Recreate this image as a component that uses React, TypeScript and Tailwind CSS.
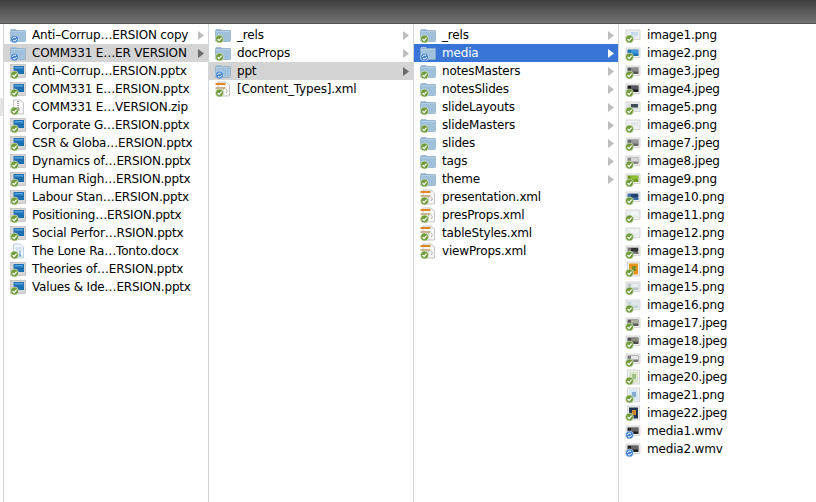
const FONT = { fontFamily: '"DejaVu Sans", sans-serif' };

type Badge = "ok" | "sync";

function BadgeMark({ kind }: { kind: Badge }) {
  return kind === "ok" ? (
    <g>
      <circle cx="4.5" cy="12" r="4" fill="#6f9a3a" stroke="#eef3e2" strokeWidth="0.6" />
      <path d="M2.6 12 L4.1 13.6 L6.6 10.6" fill="none" stroke="#fff" strokeWidth="1.2" />
    </g>
  ) : (
    <g>
      <circle cx="4.5" cy="12" r="4" fill="#3f7fd0" stroke="#e6effa" strokeWidth="0.6" />
      <path d="M2.6 12 A2 2 0 0 1 6 10.6 M6.4 12 A2 2 0 0 1 3 13.4" fill="none" stroke="#fff" strokeWidth="1" />
    </g>
  );
}

function Folder({ badge }: { badge: Badge }) {
  return (
    <svg width="16" height="16" viewBox="0 0 16 16" className="shrink-0">
      <path d="M0.5 4 L1 2 L6 2 L7 3.6 L15.5 3.6 V5 H0.5 Z" fill="#a5c0d6" />
      <rect x="0.5" y="3.5" width="15" height="11" rx="0.8" fill="#b5d0e6" stroke="#86a8c2" strokeWidth="0.7" />
      <rect x="1.2" y="5" width="13.6" height="8.8" fill="#9fc1dc" />
      <BadgeMark kind={badge} />
    </svg>
  );
}

function Pptx() {
  return (
    <svg width="16" height="16" viewBox="0 0 16 16" className="shrink-0">
      <rect x="0.5" y="1.5" width="15" height="13" fill="#d8d8d8" stroke="#b0b0b0" strokeWidth="0.6" />
      <rect x="3.5" y="3" width="10.5" height="8" fill="#1f6fb0" />
      <rect x="4.5" y="4" width="8.5" height="1.5" fill="#55a6dc" />
      <BadgeMark kind="ok" />
    </svg>
  );
}

function Xml() {
  return (
    <svg width="16" height="16" viewBox="0 0 16 16" className="shrink-0">
      <path d="M3 1 H11 L14.5 4 V15 H3 Z" fill="#f6f6f6" stroke="#a5a5a5" strokeWidth="0.6" />
      <rect x="0.5" y="2" width="10" height="2" fill="#e2861f" />
      <rect x="0.5" y="6" width="10" height="2" fill="#c9b28e" />
      <path d="M9 8 L7.5 10 L9 12 M11 8 L12.5 10 L11 12" fill="none" stroke="#9a9a9a" strokeWidth="0.7" />
      <BadgeMark kind="ok" />
    </svg>
  );
}

function Zip() {
  return (
    <svg width="16" height="16" viewBox="0 0 16 16" className="shrink-0">
      <path d="M3.5 1 H10.5 L13.5 4 V15 H3.5 Z" fill="#f8f8f8" stroke="#a5a5a5" strokeWidth="0.6" />
      <path d="M8 2 V9" stroke="#777" strokeWidth="1.2" strokeDasharray="1 1" />
      <rect x="7" y="9" width="2.4" height="3" fill="#8a8a8a" />
      <BadgeMark kind="ok" />
    </svg>
  );
}

function Docx() {
  return (
    <svg width="16" height="16" viewBox="0 0 16 16" className="shrink-0">
      <path d="M3.5 1 H10.5 L13.5 4 V15 H3.5 Z" fill="#f2f7fc" stroke="#93b4d2" strokeWidth="0.6" />
      <path d="M5 5 H12 M6 7 H12" stroke="#9fc0dd" strokeWidth="0.7" />
      <path d="M10 8 V13 M8.5 13 H11.5" stroke="#4d8ac2" strokeWidth="1" />
      <BadgeMark kind="ok" />
    </svg>
  );
}

function Thumb({ fill, inner, tall, badge = "ok" }: { fill: string; inner: string; tall?: boolean; badge?: Badge }) {
  return (
    <svg width="16" height="16" viewBox="0 0 16 16" className="shrink-0">
      {tall ? (
        <>
          <rect x="2.5" y="1" width="12" height="14" fill="#f2f2f2" stroke="#c0c0c0" strokeWidth="0.6" />
          <rect x="4" y="2.5" width="9" height="11" fill={fill} />
          <rect x="7" y="5" width="4" height="5" fill={inner} />
        </>
      ) : (
        <>
          <rect x="1" y="3" width="14" height="9.5" fill="#f2f2f2" stroke="#c0c0c0" strokeWidth="0.6" />
          <rect x="2.5" y="4.5" width="11" height="6.5" fill={fill} />
          <rect x="6" y="5" width="7" height="3.5" fill={inner} />
        </>
      )}
      <BadgeMark kind={badge} />
    </svg>
  );
}

function Arrow({ color }: { color: string }) {
  return (
    <svg width="6" height="9" viewBox="0 0 6 9" className="shrink-0">
      <path d="M0 0 L6 4.5 L0 9 Z" fill={color} />
    </svg>
  );
}

type Row = {
  name: string;
  icon: React.ReactNode;
  arrow?: boolean;
  state?: "gray" | "blue";
};

function Column({ rows, wide }: { rows: Row[]; wide?: boolean }) {
  return (
    <div className={wide ? "flex-1 border-l border-gray-300 pt-0.5 flex flex-col" : "w-[205px] border-l border-gray-300 pt-0.5 flex flex-col"}>
      {rows.map((r) => (
        <div
          key={r.name}
          className={
            "h-[18px] flex items-center pl-1.5 pr-1 gap-1.5 " +
            (r.state === "gray" ? "bg-neutral-300 " : "") +
            (r.state === "blue" ? "bg-[#3875d7] text-white " : "text-black")
          }
        >
          {r.icon}
          <span className="flex-1 whitespace-nowrap text-xs leading-4 tracking-[-0.015em]">{r.name}</span>
          {r.arrow && (
            <Arrow color={r.state === "blue" ? "#ffffff" : r.state === "gray" ? "#6b6b6b" : "#bdbdbd"} />
          )}
        </div>
      ))}
    </div>
  );
}

const col1: Row[] = [
  { name: "Anti–Corrup…ERSION copy", icon: <Folder badge="sync" />, arrow: true },
  { name: "COMM331 E…ER VERSION", icon: <Folder badge="sync" />, arrow: true, state: "gray" },
  { name: "Anti–Corrup…ERSION.pptx", icon: <Pptx /> },
  { name: "COMM331 E…ERSION.pptx", icon: <Pptx /> },
  { name: "COMM331 E…VERSION.zip", icon: <Zip /> },
  { name: "Corporate G…ERSION.pptx", icon: <Pptx /> },
  { name: "CSR & Globa…ERSION.pptx", icon: <Pptx /> },
  { name: "Dynamics of…ERSION.pptx", icon: <Pptx /> },
  { name: "Human Righ…ERSION.pptx", icon: <Pptx /> },
  { name: "Labour Stan…ERSION.pptx", icon: <Pptx /> },
  { name: "Positioning…ERSION.pptx", icon: <Pptx /> },
  { name: "Social Perfor…RSION.pptx", icon: <Pptx /> },
  { name: "The Lone Ra…Tonto.docx", icon: <Docx /> },
  { name: "Theories of…ERSION.pptx", icon: <Pptx /> },
  { name: "Values & Ide…ERSION.pptx", icon: <Pptx /> },
];

const col2: Row[] = [
  { name: "_rels", icon: <Folder badge="ok" />, arrow: true },
  { name: "docProps", icon: <Folder badge="ok" />, arrow: true },
  { name: "ppt", icon: <Folder badge="sync" />, arrow: true, state: "gray" },
  { name: "[Content_Types].xml", icon: <Xml /> },
];

const col3: Row[] = [
  { name: "_rels", icon: <Folder badge="ok" />, arrow: true },
  { name: "media", icon: <Folder badge="sync" />, arrow: true, state: "blue" },
  { name: "notesMasters", icon: <Folder badge="ok" />, arrow: true },
  { name: "notesSlides", icon: <Folder badge="ok" />, arrow: true },
  { name: "slideLayouts", icon: <Folder badge="ok" />, arrow: true },
  { name: "slideMasters", icon: <Folder badge="ok" />, arrow: true },
  { name: "slides", icon: <Folder badge="ok" />, arrow: true },
  { name: "tags", icon: <Folder badge="ok" />, arrow: true },
  { name: "theme", icon: <Folder badge="ok" />, arrow: true },
  { name: "presentation.xml", icon: <Xml /> },
  { name: "presProps.xml", icon: <Xml /> },
  { name: "tableStyles.xml", icon: <Xml /> },
  { name: "viewProps.xml", icon: <Xml /> },
];

const col4: Row[] = [
  { name: "image1.png", icon: <Thumb fill="#e4edf5" inner="#c6d9ea" /> },
  { name: "image2.png", icon: <Thumb fill="#1f6fb0" inner="#3b9ad8" /> },
  { name: "image3.jpeg", icon: <Thumb fill="#555555" inner="#8a8a8a" /> },
  { name: "image4.jpeg", icon: <Thumb fill="#1a1a1a" inner="#555566" /> },
  { name: "image5.png", icon: <Thumb fill="#d9dde0" inner="#3f4a52" /> },
  { name: "image6.png", icon: <Thumb fill="#f0f0f0" inner="#e0e6ea" /> },
  { name: "image7.jpeg", icon: <Thumb fill="#666666" inner="#9a9a9a" /> },
  { name: "image8.jpeg", icon: <Thumb fill="#8a8a8a" inner="#d5d5d5" /> },
  { name: "image9.png", icon: <Thumb fill="#6f9a1f" inner="#8dbb2f" /> },
  { name: "image10.png", icon: <Thumb fill="#3a6ea5" inner="#26426e" /> },
  { name: "image11.png", icon: <Thumb fill="#e8edf0" inner="#f4f6f8" /> },
  { name: "image12.png", icon: <Thumb fill="#e4e9ec" inner="#f2f4f6" /> },
  { name: "image13.png", icon: <Thumb fill="#777777" inner="#333333" /> },
  { name: "image14.png", icon: <Thumb tall fill="#e8941a" inner="#7d8f2c" /> },
  { name: "image15.png", icon: <Thumb fill="#b8c4cc" inner="#e8ecee" /> },
  { name: "image16.png", icon: <Thumb fill="#c5d2da" inner="#e0e8ec" /> },
  { name: "image17.jpeg", icon: <Thumb fill="#5a5a5a" inner="#b0b0a0" /> },
  { name: "image18.jpeg", icon: <Thumb fill="#4a4a4a" inner="#8a8a7a" /> },
  { name: "image19.png", icon: <Thumb fill="#777777" inner="#e5e5e5" /> },
  { name: "image20.jpeg", icon: <Thumb tall fill="#dbe6c8" inner="#a5bf8a" /> },
  { name: "image21.png", icon: <Thumb tall fill="#d5e5f2" inner="#85aed0" /> },
  { name: "image22.jpeg", icon: <Thumb tall fill="#1f3550" inner="#c88a2c" /> },
  { name: "media1.wmv", icon: <Thumb fill="#222222" inner="#666666" badge="sync" /> },
  { name: "media2.wmv", icon: <Thumb fill="#222222" inner="#666666" badge="sync" /> },
];

export default function App() {
  return (
    <div className="w-[816px] h-[502px] flex flex-col bg-white overflow-hidden" style={FONT}>
      <div className="h-6 shrink-0 bg-gradient-to-b from-neutral-700 to-neutral-500 border-b border-neutral-600" />
      <div className="flex-1 flex min-h-0">
        <div className="w-[3px] shrink-0 flex flex-col pt-[74px]">
          <div className="h-[18px] bg-neutral-200" />
        </div>
        <Column rows={col1} />
        <Column rows={col2} />
        <Column rows={col3} />
        <Column rows={col4} wide />
      </div>
    </div>
  );
}
